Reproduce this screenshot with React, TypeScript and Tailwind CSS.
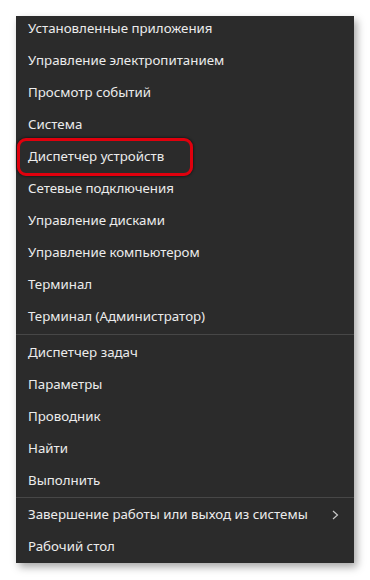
import React from "react";

const sec1 = [
  "Установленные приложения",
  "Управление электропитанием",
  "Просмотр событий",
  "Система",
  "Диспетчер устройств",
  "Сетевые подключения",
  "Управление дисками",
  "Управление компьютером",
  "Терминал",
  "Терминал (Администратор)",
];
const sec2 = ["Диспетчер задач", "Параметры", "Проводник", "Найти", "Выполнить"];

function Row({ text, first }: { text: string; first?: boolean }) {
  return (
    <div
      className={
        "flex items-center pl-3 text-[13.3px] text-[#ececec] " +
        (first ? "h-[29px] pb-[3px]" : "h-8")
      }
    >
      {text}
    </div>
  );
}

export default function App() {
  return (
    <div
      className="w-[370px] h-[580px] bg-white pt-4 pl-4"
      style={{ fontFamily: '"Noto Sans", "Open Sans", sans-serif' }}
    >
      <div className="relative w-[338px] h-[547px] bg-[#2b2b2b] shadow-[3px_4px_8px_rgba(0,0,0,0.35)] flex flex-col">
        {sec1.map((t, i) => (
          <Row key={t} text={t} first={i === 0} />
        ))}
        <div className="mt-[1px] mb-[2px] h-px bg-[#474747]" />
        {sec2.map((t) => (
          <Row key={t} text={t} />
        ))}
        <div className="mb-[1px] h-px bg-[#474747]" />
        <div className="flex items-center justify-between h-8 pl-3 pr-[15px] text-[13.3px] text-[#ececec]">
          <span>Завершение работы или выход из системы</span>
          <svg width="7" height="10" viewBox="0 0 7 10" fill="none">
            <polyline points="1,1 5.5,5 1,9" stroke="#c8c8c8" strokeWidth="1.2" />
          </svg>
        </div>
        <Row text="Рабочий стол" />
        <div className="absolute left-[1px] top-[122px] w-[176px] h-[38px] rounded-[9px] border-[3px] border-[#e0000d] shadow-[0_0_3px_rgba(0,0,0,0.8)]" />
      </div>
    </div>
  );
}
